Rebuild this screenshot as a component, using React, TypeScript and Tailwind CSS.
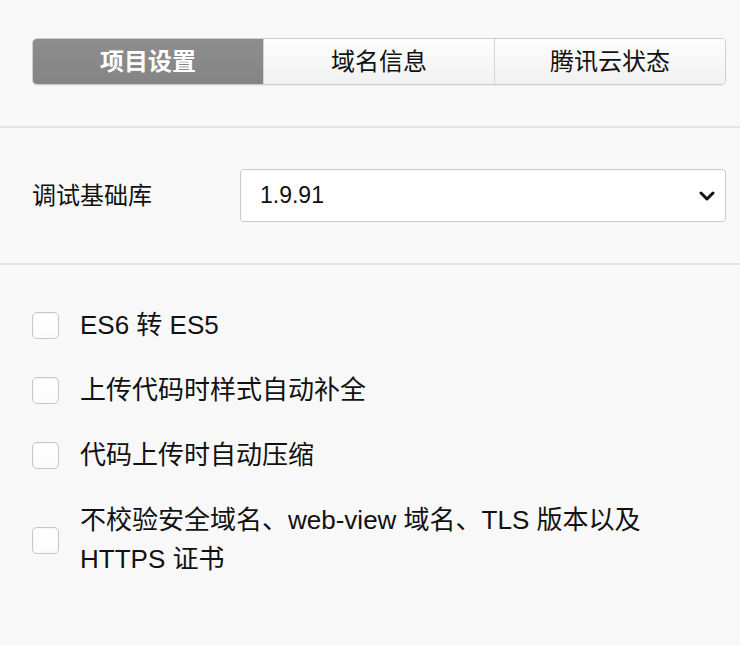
const tabs = ["项目设置", "域名信息", "腾讯云状态"]

const options = [
  "ES6 转 ES5",
  "上传代码时样式自动补全",
  "代码上传时自动压缩",
  "不校验安全域名、web-view 域名、TLS 版本以及 HTTPS 证书",
]

function Checkbox() {
  return (
    <span className="block w-[27px] h-[27px] shrink-0 rounded-[5px] border border-[#c6c6c6] bg-gradient-to-b from-white to-[#fbfbfb] shadow-[inset_0_1px_1px_rgba(0,0,0,0.04)]" />
  )
}

export default function App() {
  return (
    <div
      className="min-h-screen w-[740px] bg-[#f8f8f8] text-[#111]"
      style={{ fontFamily: '"Liberation Sans", "Noto Sans CJK SC", sans-serif' }}
    >
      {/* Tabs */}
      <div className="pl-[32px] pr-[14px] pt-[38px] pb-[41px]">
        <div className="flex h-[47px] rounded-[5px] border border-[#cfcfcf] overflow-hidden shadow-[0_1px_1px_rgba(0,0,0,0.06)]">
          {tabs.map((tab, i) => (
            <div
              key={tab}
              className={
                i === 0
                  ? "flex-1 flex items-center justify-center bg-gradient-to-b from-[#8e8e8e] to-[#848484] text-white text-[24px] font-bold"
                  : "flex-1 flex items-center justify-center border-l border-[#d4d4d4] bg-gradient-to-b from-[#fdfdfd] to-[#f1f1f1] text-[24px] text-[#111]"
              }
            >
              {tab}
            </div>
          ))}
        </div>
      </div>

      <div className="h-[2px] bg-[#e3e3e3]" />

      {/* Library version */}
      <div className="flex items-center pl-[32px] pr-[14px] py-[41px]">
        <div className="w-[208px] text-[24px] leading-none">调试基础库</div>
        <div className="flex-1 h-[53px] flex items-center justify-between rounded-[4px] border border-[#c9c9c9] bg-white pl-[19px] pr-[10px]">
          <span className="text-[23px]">1.9.91</span>
          <svg width="16" height="10" viewBox="0 0 16 10" fill="none">
            <path d="M2 2l6 6 6-6" stroke="#111" strokeWidth="3" strokeLinecap="round" strokeLinejoin="round" />
          </svg>
        </div>
      </div>

      <div className="h-[2px] bg-[#e3e3e3]" />

      {/* Options */}
      <div className="flex flex-col gap-[26px] pl-[32px] pr-[14px] pt-[41px] pb-[40px]">
        {options.map((opt) => (
          <label key={opt} className="flex items-center gap-[21px]">
            <Checkbox />
            <span className="max-w-[620px] text-[26px] leading-[39px]">{opt}</span>
          </label>
        ))}
      </div>
    </div>
  )
}
